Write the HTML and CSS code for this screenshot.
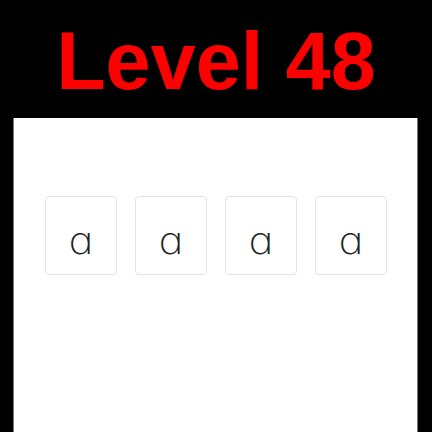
FILE: index.html
```html
<!DOCTYPE html>
<html>
<head>
<meta charset="utf-8">
<link rel="stylesheet" href="styles.css">
</head>
<body>
<header class="header"><h1 class="title">Level 48</h1></header>
<main class="panel">
  <div class="tiles">
    <div class="tile"><span class="glyph">a</span></div>
    <div class="tile"><span class="glyph">a</span></div>
    <div class="tile"><span class="glyph">a</span></div>
    <div class="tile"><span class="glyph">a</span></div>
  </div>
</main>
</body>
</html>
```
FILE: styles.css
```css
html, body {
  margin: 0;
  padding: 0;
  background: #000;
  height: 432px;
  overflow: hidden;
}
body {
  display: flex;
  flex-direction: column;
}
.header {
  padding: 21px 0 17px;
  text-align: center;
}
.title {
  margin: 0;
  font-family: "Liberation Sans", Arial, sans-serif;
  font-weight: bold;
  font-size: 81px;
  line-height: 80px;
  color: #ff0000;
}
.panel {
  flex: 1;
  margin: 0 14px 0 13px;
  background: #fff;
  border-left: 1px solid #777;
  border-right: 1px solid #777;
  padding-top: 78px;
}
.tiles {
  display: flex;
  justify-content: center;
  gap: 18px;
}
.tile {
  width: 70px;
  height: 68px;
  padding-top: 9px;
  border: 1px solid #e3e3e3;
  border-radius: 4px;
  background: #fff;
  display: flex;
  align-items: center;
  justify-content: center;
  font-family: Inter, "DejaVu Sans", sans-serif;
  font-feature-settings: "cv11" 1;
  font-weight: 250;
  font-size: 37px;
  color: #222;
}
.glyph {
  display: inline-block;
  transform: scaleX(1.12);
}
```
